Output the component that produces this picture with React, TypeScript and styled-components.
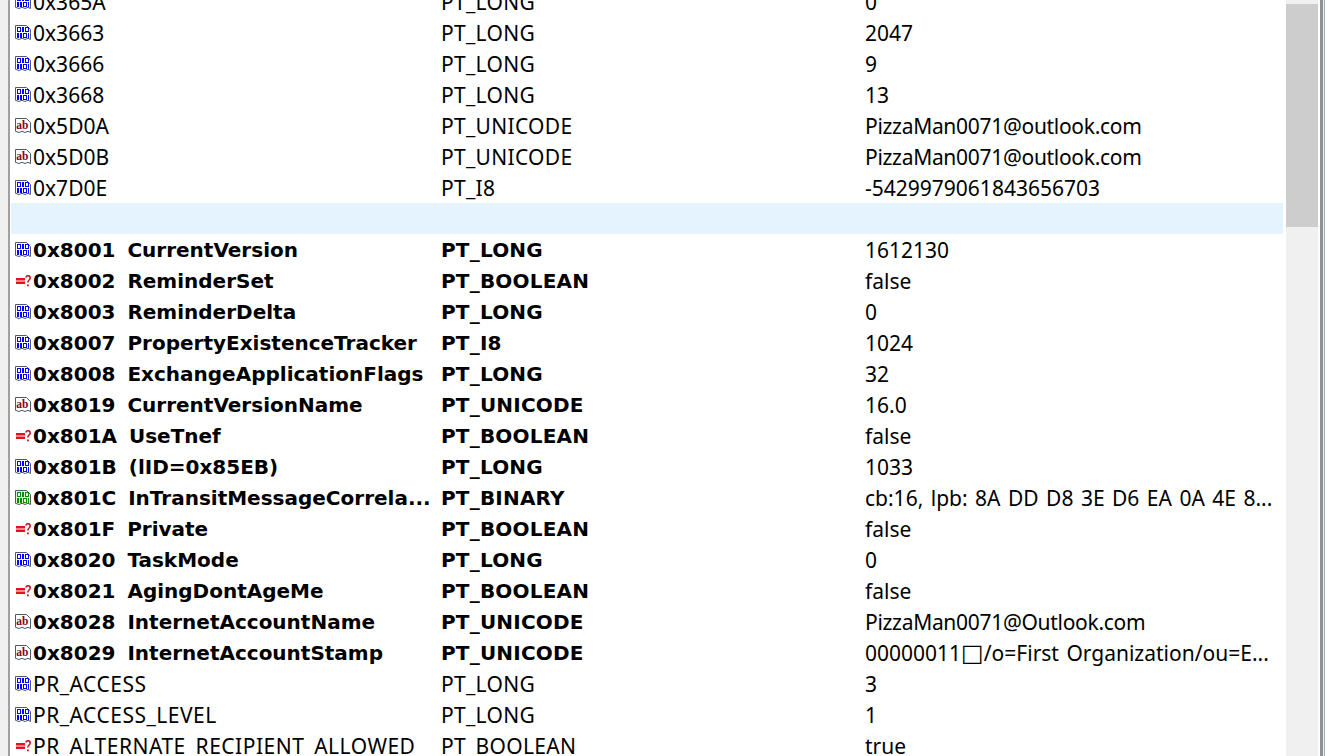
import React from 'react';
import styled, { createGlobalStyle } from 'styled-components';

type Kind = 'num' | 'str' | 'bool' | 'bin';

const rows: [Kind, string, string, string, boolean?][] = [
  ['num', '0x365A', 'PT_LONG', '0'],
  ['num', '0x3663', 'PT_LONG', '2047'],
  ['num', '0x3666', 'PT_LONG', '9'],
  ['num', '0x3668', 'PT_LONG', '13'],
  ['str', '0x5D0A', 'PT_UNICODE', 'PizzaMan0071@outlook.com'],
  ['str', '0x5D0B', 'PT_UNICODE', 'PizzaMan0071@outlook.com'],
  ['num', '0x7D0E', 'PT_I8', '-5429979061843656703'],
  ['num', '0x8001  CurrentVersion', 'PT_LONG', '1612130', true],
  ['bool', '0x8002  ReminderSet', 'PT_BOOLEAN', 'false', true],
  ['num', '0x8003  ReminderDelta', 'PT_LONG', '0', true],
  ['num', '0x8007  PropertyExistenceTracker', 'PT_I8', '1024', true],
  ['num', '0x8008  ExchangeApplicationFlags', 'PT_LONG', '32', true],
  ['str', '0x8019  CurrentVersionName', 'PT_UNICODE', '16.0', true],
  ['bool', '0x801A  UseTnef', 'PT_BOOLEAN', 'false', true],
  ['num', '0x801B  (lID=0x85EB)', 'PT_LONG', '1033', true],
  ['bin', '0x801C  InTransitMessageCorrela...', 'PT_BINARY', 'cb:16, lpb: 8A DD D8 3E D6 EA 0A 4E 8...', true],
  ['bool', '0x801F  Private', 'PT_BOOLEAN', 'false', true],
  ['num', '0x8020  TaskMode', 'PT_LONG', '0', true],
  ['bool', '0x8021  AgingDontAgeMe', 'PT_BOOLEAN', 'false', true],
  ['str', '0x8028  InternetAccountName', 'PT_UNICODE', 'PizzaMan0071@Outlook.com', true],
  ['str', '0x8029  InternetAccountStamp', 'PT_UNICODE', '00000011\u25A1/o=First Organization/ou=E...', true],
  ['num', 'PR_ACCESS', 'PT_LONG', '3'],
  ['num', 'PR_ACCESS_LEVEL', 'PT_LONG', '1'],
  ['bool', 'PR_ALTERNATE_RECIPIENT_ALLOWED', 'PT_BOOLEAN', 'true'],
];

const GlobalStyle = createGlobalStyle`
  html, body {
    margin: 0;
    height: 100%;
    overflow: hidden;
    background: #fff;
  }
`;

const Window = styled.div`
  display: flex;
  width: 1334px;
  height: 756px;
  overflow: hidden;
  background: #fff;
`;

const LeftEdge = styled.div`
  flex: none;
  width: 8px;
  background: #f0f0f0;
  border-right: 2px solid #a0a0a0;
`;

const List = styled.div`
  flex: none;
  width: 1272px;
  height: 756px;
  margin-left: 1px;
  overflow: hidden;
`;

const Rows = styled.div`
  margin-top: -14px;
`;

const Row = styled.div<{ $selected?: boolean }>`
  display: grid;
  grid-template-columns: 408px 424px 1fr;
  align-items: center;
  height: 31px;
  padding-left: 22px;
  font-family: 'Noto Sans', sans-serif;
  font-size: 21px;
  color: #000;
  white-space: pre;
  background: ${(p) => (p.$selected ? '#e5f3ff' : 'transparent')};
`;

const NameCell = styled.div<{ $bold?: boolean; $wide?: boolean }>`
  position: relative;
  font-family: ${(p) => (p.$bold ? "'DejaVu Sans', sans-serif" : "'Noto Sans', sans-serif")};
  font-size: ${(p) => (p.$bold ? '20px' : '21px')};
  font-weight: ${(p) => (p.$bold ? 700 : 400)};
  letter-spacing: ${(p) => (p.$wide ? '0.5px' : '0')};
  word-spacing: ${(p) => (p.$bold ? '-1px' : '0')};

  svg {
    position: absolute;
    left: -18px;
    top: 50%;
    margin-top: -8px;
  }
`;

const TypeCell = styled.div<{ $bold?: boolean }>`
  font-family: ${(p) => (p.$bold ? "'DejaVu Sans', sans-serif" : "'Noto Sans', sans-serif")};
  font-size: ${(p) => (p.$bold ? '20px' : '21px')};
  font-weight: ${(p) => (p.$bold ? 700 : 400)};
  letter-spacing: ${(p) => (p.$bold ? '0.2px' : '0.3px')};
`;

const ValueCell = styled.div<{ $tight?: boolean }>`
  word-spacing: 2px;
  letter-spacing: ${(p) => (p.$tight ? '-0.3px' : '0')};
`;

const MissingGlyph = styled.span`
  font-family: 'DejaVu Sans', sans-serif;
  font-size: 24px;
  line-height: 1;
`;

const ScrollGutter = styled.div`
  flex: none;
  margin-left: 3px;
  width: 32px;
  height: 756px;
  padding-top: 4px;
  box-sizing: border-box;
  background: #f0f0f0;
`;

const ScrollThumb = styled.div`
  height: 223px;
  background: #cdcdcd;
`;

const RightEdge = styled.div`
  flex: none;
  width: 1px;
  margin-left: 2px;
  background: #f0f0f0;
  border-left: 3px solid #8e9296;
  border-right: 1px solid #a8a8a8;
`;

const PropIcon = ({ kind }: { kind: Kind }) => {
  if (kind === 'bool') {
    return (
      <svg width="16" height="16" viewBox="0 0 16 16">
        <path d="M1 5h9v2.500H1zM1 8.500h9V11H1z" fill="#e8101c" />
        <path d="M10.800 4.500C11.500 2 15.200 2.300 15.200 5c0 2-2.400 2.200-2.400 4.500" fill="none" stroke="#c01020" strokeWidth="1.500" />
        <path d="M12 11.500h1.800v1.800H12z" fill="#c01020" />
      </svg>
    );
  }
  const isBinary = kind === 'bin';
  const colour = isBinary ? '#0a8a0a' : '#0000ff';
  return (
    <svg width="16" height="16" viewBox="0 0 16 16">
      <path
        d="M.500 .500h11l4 4v10l-2.500-1.200-3 1.200-3-1.200-3 1.200-3.500-1.200z"
        fill={isBinary ? '#e2f5d8' : '#fff'}
        stroke="#50586a"
      />
      {kind === 'str' ? (
        <text x="1.200" y="10.500" fontFamily="'Liberation Serif', serif" fontWeight="700" fontSize="11.500" fill="#8a0010">
          ab
        </text>
      ) : (
        <g fill="none" stroke={colour} shapeRendering="crispEdges">
          <rect x="2.500" y="2.500" width="3" height="4" />
          <path d="M7.500 2v5M8.500 2v5" />
          <rect x="10.500" y="2.500" width="3" height="4" />
          <path d="M2.500 8v5M3.500 8v5M5.500 8v5M6.500 8v5" />
          <rect x="8.500" y="8.500" width="3" height="4" />
          <path d="M13.500 8v5" />
        </g>
      )}
    </svg>
  );
};

const ValueText = ({ value }: { value: string }) => {
  const [before, after] = value.split('\u25A1');
  if (after === undefined) return <>{value}</>;
  return (
    <>
      {before}
      <MissingGlyph>{'\u25A1'}</MissingGlyph>
      {after}
    </>
  );
};

export default function App() {
  return (
    <>
      <GlobalStyle />
      <Window>
        <LeftEdge />
        <List>
          <Rows>
            {rows.map(([kind, name, type, value, bold], i) => (
              <React.Fragment key={name}>
                {i === 7 && <Row $selected />}
                <Row>
                  <NameCell $bold={bold} $wide={name.startsWith('PR_')}>
                    <PropIcon kind={kind} />
                    {name}
                  </NameCell>
                  <TypeCell $bold={bold}>{type}</TypeCell>
                  <ValueCell $tight={value.includes('@')}>
                    <ValueText value={value} />
                  </ValueCell>
                </Row>
              </React.Fragment>
            ))}
          </Rows>
        </List>
        <ScrollGutter>
          <ScrollThumb />
        </ScrollGutter>
        <RightEdge />
      </Window>
    </>
  );
}
